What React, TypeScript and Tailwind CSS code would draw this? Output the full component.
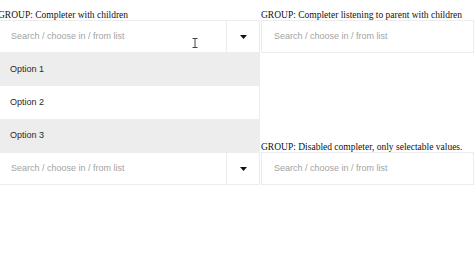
const Caret = () => (
  <svg width="7" height="4" viewBox="0 0 7 4" className="block">
    <path d="M0 0h7L3.5 4z" fill="#111" />
  </svg>
);

const Completer = ({ arrow }: { arrow: boolean }) => (
  <div className="flex h-[33px] border border-[#ececec] bg-white">
    <div className="flex-1 flex items-center px-3 text-[9px] text-[#a3a3a3]">
      Search / choose in / from list
    </div>
    {arrow && (
      <div className="w-[33px] flex items-center justify-center border-l border-[#ececec]">
        <Caret />
      </div>
    )}
  </div>
);

const Label = ({ children }: { children: string }) => (
  <div className="h-[12px] flex items-end leading-none text-[9.5px] text-[#111] font-['Liberation_Serif',serif] whitespace-nowrap">
    {children}
  </div>
);

const options = ["Option 1", "Option 2", "Option 3"];

const App = () => {
  return (
    <div className="w-[474px] h-[260px] bg-white overflow-hidden font-['Liberation_Sans',Arial,sans-serif]">
      <div className="flex ml-[-2px] pt-[8px]">
        <div className="w-[262px] relative flex flex-col">
          <Label>GROUP: Completer with children</Label>
          <div className="relative">
            <Completer arrow />
            <svg width="6" height="10" viewBox="0 0 6 10" className="absolute left-[194px] top-[18px]">
              <path d="M0.5 0.5h5M3 0.5v9M0.5 9.5h5" stroke="#444" strokeWidth="1" fill="none" />
            </svg>
          </div>
          <div className="h-[87px]" />
          <Label>GROUP: Completer with children</Label>
          <Completer arrow />
          <div className="absolute left-0 right-0 top-[45px] border-r border-[#ececec] bg-white">
            {options.map((o, i) => (
              <div
                key={o}
                className={`h-[33px] flex items-center px-3 text-[9px] text-[#2a2a2a] ${i % 2 === 0 ? "bg-[#ededed]" : "bg-white"}`}
              >
                {o}
              </div>
            ))}
          </div>
        </div>
        <div className="flex-1 ml-[1px] flex flex-col">
          <Label>GROUP: Completer listening to parent with children</Label>
          <Completer arrow={false} />
          <div className="h-[87px]" />
          <Label>GROUP: Disabled completer, only selectable values.</Label>
          <Completer arrow={false} />
        </div>
      </div>
    </div>
  );
};

export default App;
